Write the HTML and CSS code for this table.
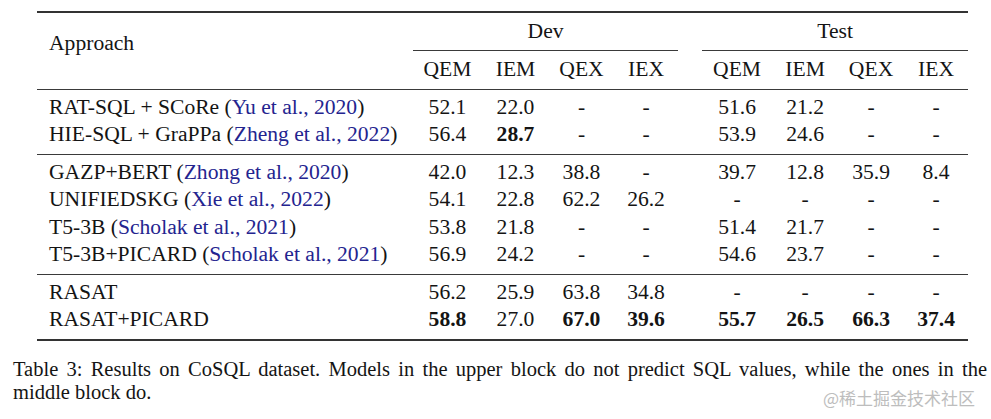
FILE: index.html
```html
<!DOCTYPE html>
<html lang="en">
<head>
<meta charset="utf-8">
<title>Table 3: Results on CoSQL dataset</title>
<link rel="stylesheet" href="styles.css">
</head>
<body>
<div class="page">
  <table class="results">
    <colgroup>
      <col class="c-approach">
      <col class="c-69"><col class="c-67"><col class="c-65"><col class="c-64">
      <col class="c-gap">
      <col class="c-70"><col class="c-66"><col class="c-66"><col class="c-64">
    </colgroup>
    <thead>
      <tr class="h1">
        <th rowspan="2" class="approach">Approach</th>
        <th colspan="4" class="group">Dev</th>
        <th class="gap"></th>
        <th colspan="4" class="group">Test</th>
      </tr>
      <tr class="h2">
        <th>QEM</th><th>IEM</th><th>QEX</th><th>IEX</th>
        <th class="gap"></th>
        <th>QEM</th><th>IEM</th><th>QEX</th><th>IEX</th>
      </tr>
    </thead>
    <tbody>
      <tr>
        <td class="name">RAT-SQL + SCoRe (<span class="cite">Yu et al., 2020</span>)</td>
        <td>52.1</td><td>22.0</td><td>-</td><td>-</td><td></td>
        <td>51.6</td><td>21.2</td><td>-</td><td>-</td>
      </tr>
      <tr>
        <td class="name">HIE-SQL + GraPPa (<span class="cite">Zheng et al., 2022</span>)</td>
        <td>56.4</td><td class="b">28.7</td><td>-</td><td>-</td><td></td>
        <td>53.9</td><td>24.6</td><td>-</td><td>-</td>
      </tr>
    </tbody>
    <tbody>
      <tr>
        <td class="name">GAZP+BERT (<span class="cite">Zhong et al., 2020</span>)</td>
        <td>42.0</td><td>12.3</td><td>38.8</td><td>-</td><td></td>
        <td>39.7</td><td>12.8</td><td>35.9</td><td>8.4</td>
      </tr>
      <tr>
        <td class="name">UNIFIEDSKG (<span class="cite">Xie et al., 2022</span>)</td>
        <td>54.1</td><td>22.8</td><td>62.2</td><td>26.2</td><td></td>
        <td>-</td><td>-</td><td>-</td><td>-</td>
      </tr>
      <tr>
        <td class="name">T5-3B (<span class="cite">Scholak et al., 2021</span>)</td>
        <td>53.8</td><td>21.8</td><td>-</td><td>-</td><td></td>
        <td>51.4</td><td>21.7</td><td>-</td><td>-</td>
      </tr>
      <tr>
        <td class="name">T5-3B+PICARD (<span class="cite">Scholak et al., 2021</span>)</td>
        <td>56.9</td><td>24.2</td><td>-</td><td>-</td><td></td>
        <td>54.6</td><td>23.7</td><td>-</td><td>-</td>
      </tr>
    </tbody>
    <tbody>
      <tr>
        <td class="name">RASAT</td>
        <td>56.2</td><td>25.9</td><td>63.8</td><td>34.8</td><td></td>
        <td>-</td><td>-</td><td>-</td><td>-</td>
      </tr>
      <tr>
        <td class="name">RASAT+PICARD</td>
        <td class="b">58.8</td><td>27.0</td><td class="b">67.0</td><td class="b">39.6</td><td></td>
        <td class="b">55.7</td><td class="b">26.5</td><td class="b">66.3</td><td class="b">37.4</td>
      </tr>
    </tbody>
  </table>

  <div class="caption">
    <p class="line first">Table 3: Results on CoSQL dataset. Models in the upper block do not predict SQL values, while the ones in the</p>
    <p class="line">middle block do.</p>
    <span class="watermark">@稀土掘金技术社区</span>
  </div>
</div>
</body>
</html>
```

FILE: styles.css
```css
html, body {
  margin: 0;
  padding: 0;
  background: #ffffff;
}

.page {
  position: relative;
  width: 991px;
  height: 419px;
  padding-top: 11px;
  box-sizing: border-box;
  font-family: "Liberation Serif", "Times New Roman", serif;
  color: #141414;
}

.results {
  margin-left: 37px;
  width: 931px;
  border-collapse: collapse;
  table-layout: fixed;
  font-size: 21.6px;
  border-top: 2px solid #333333;
  border-bottom: 2px solid #333333;
}

.c-approach { width: 376px; }
.c-69 { width: 69px; }
.c-67 { width: 67px; }
.c-65 { width: 65px; }
.c-64 { width: 64px; }
.c-gap { width: 24px; }
.c-70 { width: 70px; }
.c-66 { width: 66px; }

.results th,
.results td {
  padding: 0;
  font-weight: normal;
  text-align: center;
  white-space: nowrap;
  line-height: 27.5px;
}

.results thead {
  border-bottom: 1px solid #3a3a3a;
}

.results tbody + tbody {
  border-top: 1px solid #3a3a3a;
}

.results .h1 th {
  padding-top: 5px;
  padding-bottom: 4.5px;
}

.results .h1 .group {
  border-bottom: 1px solid #3a3a3a;
}

.results .h2 th {
  padding-top: 4.5px;
  padding-bottom: 5.5px;
}

.results .h1 th.approach {
  text-align: left;
  vertical-align: top;
  padding-left: 12px;
  padding-top: 17px;
}

.results td.name {
  text-align: left;
  padding-left: 12px;
}

.results tbody tr:first-child td {
  padding-top: 4px;
}

.results tbody tr:last-child td {
  padding-bottom: 5px;
}

.results td.b {
  font-weight: bold;
}

.cite {
  color: #24248f;
}

.caption {
  position: relative;
  margin: 17px 0 0 13px;
  width: 974px;
  font-size: 20.5px;
  line-height: 23px;
}

.caption .line {
  margin: 0;
  white-space: nowrap;
}

.caption .first {
  text-align: justify;
  text-align-last: justify;
  white-space: normal;
}

.watermark {
  position: absolute;
  right: 12px;
  bottom: -4px;
  font-family: "Noto Sans CJK SC", "Noto Sans", sans-serif;
  font-size: 17px;
  line-height: 20px;
  color: #bdbdbd;
}
```
